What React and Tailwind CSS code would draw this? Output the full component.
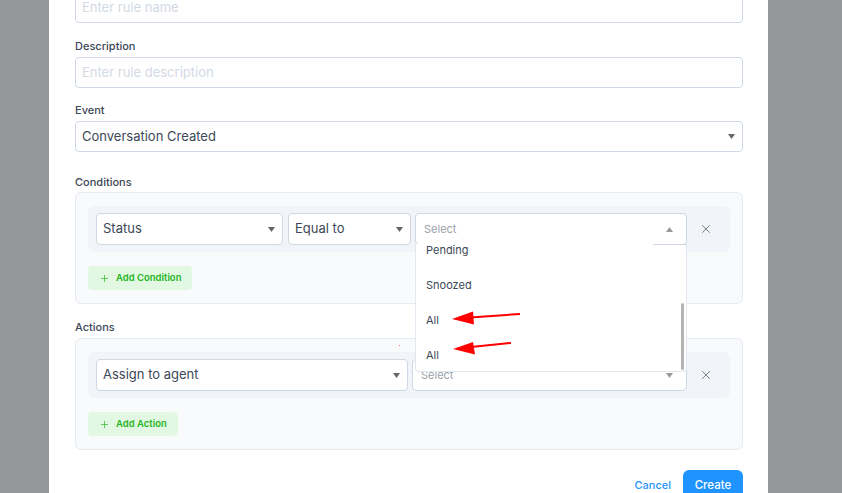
import React from 'react';
import { Plus, X } from 'lucide-react';

const Label = ({ children, className = '' }) => (
  <div className={`text-[11px] leading-4 font-medium text-[#3c4858] ${className}`}>{children}</div>
);

const TextInput = ({ placeholder, className = '' }) => (
  <div className={`h-[31px] rounded border border-[#cfd8e3] bg-white pl-[6px] flex items-center text-[13px] text-[#d3dae3] ${className}`}>
    {placeholder}
  </div>
);

const Caret = ({ up = false, color = '#666' }) => (
  <svg width="7" height="5" viewBox="0 0 7 5" className="shrink-0">
    {up ? <polygon points="0,5 7,5 3.5,0" fill={color} /> : <polygon points="0,0 7,0 3.5,5" fill={color} />}
  </svg>
);

const SelectBox = ({ value, className = '' }) => (
  <div className={`h-[32px] rounded border border-[#cfd8e3] bg-white pl-[6px] pr-[7px] flex items-center justify-between ${className}`}>
    <span className="text-[13px] text-[#3c4858]">{value}</span>
    <Caret />
  </div>
);

const RemoveButton = () => (
  <div className="w-[38px] flex items-center justify-center text-[#5a6778]">
    <X size={14} strokeWidth={1.4} />
  </div>
);

const AddButton = ({ children }) => (
  <div className="mt-[14px] h-6 self-start inline-flex items-center gap-[6px] px-[11px] rounded bg-[#e3f8e3] text-[#23b523] text-[9.5px] font-semibold">
    <Plus size={11} strokeWidth={1.5} />
    {children}
  </div>
);

const StatusDropdown = () => (
  <div className="absolute top-[31px] left-0 w-[272px] h-[128px] z-10 bg-white border-x border-b border-[#e2e8f0] rounded-b overflow-hidden">
    <div className="absolute top-0 right-0 w-[33px] h-px bg-[#cfd8e3]" />
    <div className="-mt-[11px]">
      {['Pending', 'Snoozed', 'All', 'All', 'Open'].map((item, i) => (
        <div key={i} className="h-[35px] flex items-center pl-[10px] text-[11px] text-[#3c4858]">
          {item}
        </div>
      ))}
    </div>
    <div className="absolute right-[2px] top-[59px] w-[3px] h-[67px] rounded bg-[#b4b4b4]" />
  </div>
);

const App = () => {
  return (
    <div className="relative w-[842px] h-[493px] overflow-hidden bg-[#959697] font-['Inter',sans-serif]">
      <div className="ml-[49px] w-[719px] h-full bg-white overflow-hidden">
        <div className="pl-[26px] pr-[25px] -mt-[8px]">
          <TextInput placeholder="Enter rule name" />

          <Label className="mt-[15px] mb-[3px]">Description</Label>
          <TextInput placeholder="Enter rule description" />

          <Label className="mt-[14px] mb-[3px]">Event</Label>
          <div className="h-[31px] rounded border border-[#cfd8e3] bg-white pl-[6px] pr-[7px] flex items-center justify-between">
            <span className="text-[13px] text-[#3c4858]">Conversation Created</span>
            <Caret />
          </div>

          {/* Conditions */}
          <Label className="mt-[22px] mb-[2px]">Conditions</Label>
          <div className="rounded-md border border-[#e6ebf1] bg-[#f8fafc] px-3 pt-[13px] pb-[13px] flex flex-col">
            <div className="rounded-md bg-[#f1f5f9] pl-2 py-[7px] flex items-center">
              <SelectBox value="Status" className="w-[187px]" />
              <SelectBox value="Equal to" className="w-[123px] ml-[5px]" />
              <div className="relative w-[272px] ml-[4px]">
                <div className="h-[32px] rounded border border-[#cfd8e3] bg-white pl-[8px] pr-[13px] flex items-center justify-between">
                  <span className="text-[11px] text-[#9aa1a9]">Select</span>
                  <Caret up color="#999" />
                </div>
                <StatusDropdown />
              </div>
              <RemoveButton />
            </div>
            <AddButton>Add Condition</AddButton>
          </div>

          {/* Actions */}
          <Label className="mt-[15px] mb-[3px]">Actions</Label>
          <div className="rounded-md border border-[#e6ebf1] bg-[#f8fafc] px-3 pt-[13px] pb-[13px] flex flex-col">
            <div className="rounded-md bg-[#f1f5f9] pl-2 py-[7px] flex items-center">
              <SelectBox value="Assign to agent" className="w-[312px]" />
              <div className="w-[275px] ml-[4px] h-[32px] rounded border border-[#cfd8e3] bg-white pl-[8px] pr-[13px] flex items-center justify-between">
                <span className="text-[11px] text-[#9aa1a9]">Select</span>
                <Caret color="#999" />
              </div>
              <RemoveButton />
            </div>
            <AddButton>Add Action</AddButton>
          </div>

          {/* Footer */}
          <div className="mt-[20px] flex justify-end items-start gap-[12px]">
            <div className="h-[31px] flex items-center text-[11px] font-medium text-[#1f93ff]">Cancel</div>
            <div className="h-[32px] w-[60px] rounded-md bg-[#1f93ff] flex items-center justify-center text-[11.5px] font-medium text-white">
              Create
            </div>
          </div>
        </div>
      </div>

      {/* annotation arrows */}
      <svg className="absolute left-0 top-0 z-20 pointer-events-none" width="842" height="493" viewBox="0 0 842 493">
        <line x1="520" y1="314" x2="470" y2="317.5" stroke="#ff0000" strokeWidth="2" />
        <polygon points="452,319 473,311.5 474,324.5" fill="#ff0000" />
        <line x1="511" y1="343" x2="471" y2="347" stroke="#ff0000" strokeWidth="2" />
        <polygon points="453,349 473,342 475,354.5" fill="#ff0000" />
        <rect x="399" y="345" width="1" height="1" fill="#ff6b6b" />
      </svg>
    </div>
  );
};

export default App;
